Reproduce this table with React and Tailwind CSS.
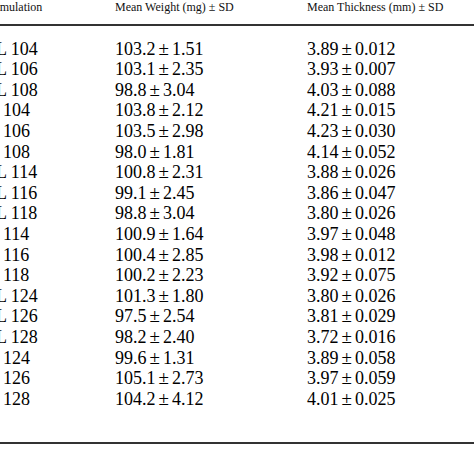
import React from "react";

const rows = [
  ["L 104", "103.2 ± 1.51", "3.89 ± 0.012"],
  ["L 106", "103.1 ± 2.35", "3.93 ± 0.007"],
  ["L 108", "98.8 ± 3.04", "4.03 ± 0.088"],
  ["104", "103.8 ± 2.12", "4.21 ± 0.015"],
  ["106", "103.5 ± 2.98", "4.23 ± 0.030"],
  ["108", "98.0 ± 1.81", "4.14 ± 0.052"],
  ["L 114", "100.8 ± 2.31", "3.88 ± 0.026"],
  ["L 116", "99.1 ± 2.45", "3.86 ± 0.047"],
  ["L 118", "98.8 ± 3.04", "3.80 ± 0.026"],
  ["114", "100.9 ± 1.64", "3.97 ± 0.048"],
  ["116", "100.4 ± 2.85", "3.98 ± 0.012"],
  ["118", "100.2 ± 2.23", "3.92 ± 0.075"],
  ["L 124", "101.3 ± 1.80", "3.80 ± 0.026"],
  ["L 126", "97.5 ± 2.54", "3.81 ± 0.029"],
  ["L 128", "98.2 ± 2.40", "3.72 ± 0.016"],
  ["124", "99.6 ± 1.31", "3.89 ± 0.058"],
  ["126", "105.1 ± 2.73", "3.97 ± 0.059"],
  ["128", "104.2 ± 4.12", "4.01 ± 0.025"],
];

function Value({ text }) {
  const [a, b] = text.split(" ± ");
  return (
    <span>
      {a}
      <span className="inline-block px-[3px] text-[19px]">±</span>
      {b}
    </span>
  );
}

export default function App() {
  return (
    <div
      className="w-[474px] h-[474px] overflow-hidden bg-white text-black"
      style={{ fontFamily: '"Liberation Serif", "Times New Roman", serif' }}
    >
      <div className="flex h-[24px] text-[12px] leading-[14px] whitespace-nowrap text-[#111]">
        <div className="w-[115px] ml-[-17px]">Formulation</div>
        <div className="w-[192px] ml-[17px]">Mean Weight (mg) ± SD</div>
        <div>Mean Thickness (mm) ± SD</div>
      </div>
      <div className="h-[2px] bg-[#333]"></div>

      <div className="pt-[12.6px] text-[18px] leading-[20.6px] whitespace-nowrap">
        {rows.map((r, i) => (
          <div key={i} className="flex">
            <div className="w-[115px]">
              {r[0].startsWith("L") ? (
                <span className="ml-[-4px]">{r[0]}</span>
              ) : (
                <span className="ml-[3px]">{r[0]}</span>
              )}
            </div>
            <div className="w-[192px]">
              <Value text={r[1]} />
            </div>
            <div>
              <Value text={r[2]} />
            </div>
          </div>
        ))}
      </div>

      <div className="h-[32.6px]"></div>
      <div className="h-[2px] bg-[#333]"></div>
    </div>
  );
}
